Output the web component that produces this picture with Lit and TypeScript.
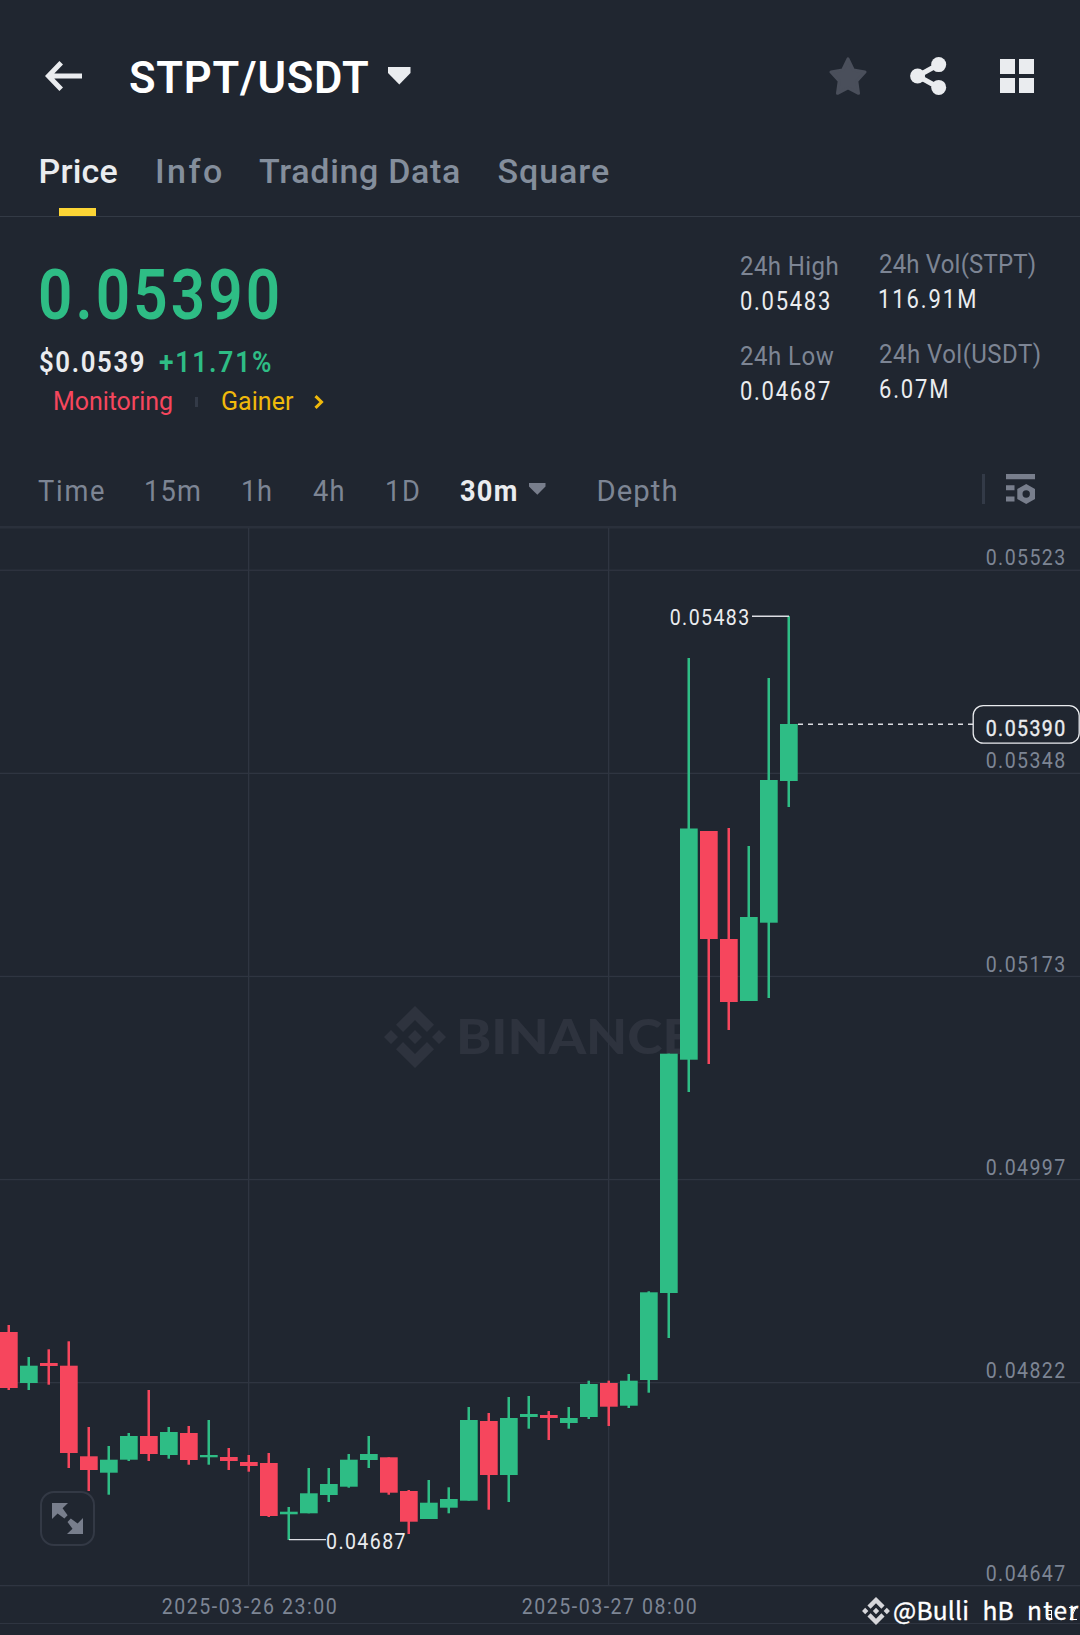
import { LitElement, html, svg, css } from "lit";
import { customElement, property } from "lit/decorators.js";
import { classMap } from "lit/directives/class-map.js";

/** A one-line label whose visible glyphs span exactly `w` pixels; `squeeze` condenses the glyphs. */
@customElement("fit-label")
class FitLabel extends LitElement {
  static styles = css`
    :host { display: block; white-space: pre; }
    .text { display: inline-block; transform-origin: 0 50%; }
  `;
  @property() text = "";
  @property({ type: Number }) w = 0;
  @property({ type: Number }) squeeze = 1;

  firstUpdated() {
    const cs = getComputedStyle(this);
    const ctx = document.createElement("canvas").getContext("2d")!;
    ctx.font = `${cs.fontWeight} ${cs.fontSize} ${cs.fontFamily}`;
    const m = ctx.measureText(this.text);
    const ink = m.actualBoundingBoxLeft + m.actualBoundingBoxRight;
    const span = this.renderRoot.querySelector(".text") as HTMLElement;
    span.style.letterSpacing = `${(this.w / this.squeeze - ink) / (this.text.length - 1)}px`;
    span.style.marginLeft = `${m.actualBoundingBoxLeft * this.squeeze}px`;
    if (this.squeeze !== 1) span.style.transform = `scaleX(${this.squeeze})`;
    this.style.width = `${this.w}px`;
  }
  render() {
    return html`<span class="text">${this.text}</span>`;
  }
}

type Candle = [up: 0 | 1, high: number, top: number, bottom: number, low: number];

const CANDLES: Candle[] = [
  [0, 1325, 1332, 1388, 1390], [1, 1357, 1365.7, 1383, 1390], [0, 1349.3, 1363, 1366, 1384.7],
  [0, 1341.3, 1365.7, 1453, 1468], [0, 1427, 1456.3, 1470, 1491], [1, 1446, 1459.7, 1472.7, 1494.7],
  [1, 1433, 1436, 1459.7, 1461], [0, 1390, 1436, 1454, 1461], [1, 1427, 1432, 1455, 1458.7],
  [0, 1426, 1433, 1460, 1464.7], [1, 1420, 1455, 1457.3, 1464.7], [0, 1448, 1457, 1461, 1470],
  [0, 1455, 1462, 1466, 1471.7], [0, 1453, 1463, 1516, 1517], [1, 1507, 1511.7, 1514.3, 1540],
  [1, 1468, 1493.3, 1513.3, 1513.3], [1, 1468, 1484, 1495, 1502], [1, 1454, 1459.7, 1486.7, 1487.7],
  [1, 1436, 1454, 1460, 1468], [0, 1457.3, 1457.3, 1492.7, 1494.7], [0, 1490, 1491, 1521.7, 1534],
  [1, 1480, 1502.7, 1519, 1519], [1, 1487.3, 1499, 1507.7, 1513.3], [1, 1407, 1420, 1500.7, 1500.7],
  [0, 1413, 1421, 1475, 1509.7], [1, 1397, 1418, 1475, 1502], [1, 1396, 1414, 1417, 1428.7],
  [0, 1411, 1415, 1418, 1440], [1, 1407, 1418, 1423, 1428.7], [1, 1380.7, 1384, 1417, 1419],
  [0, 1380.7, 1383, 1406.7, 1426], [1, 1374, 1380.7, 1405.7, 1408], [1, 1291.3, 1292.3, 1380, 1392.7],
  [1, 1053.7, 1053.7, 1293, 1338], [1, 658, 828.5, 1059.7, 1092], [0, 831, 831, 939, 1064],
  [0, 828, 939, 1002, 1030], [1, 846, 917, 1001, 1001], [1, 678, 780, 922.7, 998],
  [1, 616, 724, 781, 807],
];

const LEVELS: [string, number][] = [
  ["0.05523", 569.6], ["0.05348", 772.7], ["0.05173", 975.8],
  ["0.04997", 1178.9], ["0.04822", 1382], ["0.04647", 1585],
];

/* Binance mark, centred on the origin inside a 62 unit square. */
const mark = svg`
  <path d="M0-31 19-12.2 12-5 0-17-12-5-19-12.2ZM0 31 19 12.2 12 5 0 17-12 5-19 12.2Z"/>
  <path d="M0-7 7 0 0 7-7 0ZM-24-7-17 0-24 7-31 0ZM24-7 31 0 24 7 17 0Z"/>`;

@customElement("candle-chart")
class CandleChart extends LitElement {
  static styles = css`
    :host { display: block; }
    svg { display: block; font: 400 22.2px Roboto, "Liberation Sans", sans-serif; }
    .grid { fill: #2f3541; }
    .axis { fill: #7d8594; }
    .value { fill: #eaecef; }
    .current { fill: #eaecef; stroke: #eaecef; stroke-width: .4; }
    .up { fill: #2ebd85; }
    .down { fill: #f6465d; }
    .brand { fill: #2e333e; }
    .brand-text { font: 900 47px Lato, sans-serif; }
    .leader { stroke: #dcdde3; stroke-width: 1.4; fill: none; }
    .dash { stroke: #dcdde3; stroke-width: 1.4; stroke-dasharray: 5 5; }
    .tag { fill: #202630; stroke: #eaecef; stroke-width: 1.3; }
    .button { fill: #202630; stroke: #333945; stroke-width: 2; }
    .glyph { fill: #787e8c; }
    .credit { fill: #fff; stroke: #fff; stroke-width: .35; font: 400 24.5px "Noto Sans CJK SC", "Noto Sans", sans-serif; }
    .marks { stroke: #fff; stroke-width: 1; fill: none; }
    .credit-mark { fill: #d6d6da; }
  `;

  private number(text: string, x: number, y: number, cls: string, width = 79.5) {
    const k = 0.88;
    return svg`<text class=${cls} transform="translate(${x} ${y}) scale(${k} 1)" textLength=${width / k}>${text}</text>`;
  }

  private credit(text: string, x: number, width: number) {
    return svg`<text class="credit" x=${x} y="1620" textLength=${width}>${text}</text>`;
  }

  render() {
    return html`<svg width="1080" height="1109" viewBox="0 526 1080 1109">
      <rect x="0" y="526" width="1080" height="2.5" fill="#2a303b"></rect>
      <g class="brand">
        <g transform="translate(415 1037)">${mark}</g>
        <text class="brand-text" x="456" y="1053.7" textLength="237" lengthAdjust="spacingAndGlyphs">BINANCE</text>
      </g>
      ${LEVELS.map(([, y]) => svg`<rect class="grid" x="0" y=${y} width="1080" height="1.3"/>`)}
      <rect class="grid" x="248" y="528" width="1.3" height="1057"></rect>
      <rect class="grid" x="608" y="528" width="1.3" height="1057"></rect>
      <rect class="grid" x="0" y="1623" width="1080" height="1"></rect>
      ${CANDLES.map(([up, high, top, bottom, low], i) => svg`
        <g class=${up ? "up" : "down"}>
          <rect x=${i * 20 + 7.5} y=${high} width="2.5" height=${low - high}/>
          <rect x=${i * 20} y=${top} width="17.7" height=${bottom - top}/>
        </g>`)}
      ${LEVELS.map(([t, y]) => this.number(t, 985.7, y - 4.3, "axis"))}
      <line class="dash" x1="798" y1="724.3" x2="973" y2="724.3"></line>
      <rect class="tag" x="973.2" y="705.6" width="106" height="37.6" rx="10"></rect>
      ${this.number("0.05390", 985.7, 735.7, "current")}
      <path class="leader" d="M752 616.3H789"></path>
      ${this.number("0.05483", 669.7, 624.7, "value")}
      <path class="leader" d="M289 1539.6H326"></path>
      ${this.number("0.04687", 326, 1549, "value")}
      ${this.number("2025-03-26 23:00", 161.7, 1613.5, "axis", 175)}
      ${this.number("2025-03-27 08:00", 521.7, 1613.5, "axis", 175)}
      <rect class="button" x="41" y="1492" width="53" height="53" rx="13"></rect>
      <path class="glyph" d="M52 1503H68L62.6 1508.3 67.6 1515.3 64.4 1518.6 57.6 1513.6 52 1519ZM83 1534H67L72.5 1528.7 67.5 1522 70.8 1518.6 77.6 1523.5 83 1518Z"></path>
      <g class="credit-mark" transform="translate(876 1611) scale(.45)">${mark}</g>
      ${this.credit("@Bulli", 893, 76)}
      ${this.credit("hB", 982.5, 31)}
      ${this.credit("nter", 1027, 51)}
      <path class="marks" d="M1046 1610.5H1052M1046 1614.5H1052M1046 1618.5H1052M1051.5 1610V1620M1069 1607.5H1076L1070 1619.5H1077"></path>
    </svg>`;
  }
}

@customElement("app-root")
class AppRoot extends LitElement {
  static styles = css`
    :host {
      display: block; width: 1080px; height: 1635px; overflow: hidden;
      background: #202630; color: #eaecef;
      font-family: Roboto, "Liberation Sans", sans-serif;
    }
    svg { display: block; flex: none; }
    .header { display: flex; align-items: center; box-sizing: border-box; height: 130px; padding: 21px 46px 0 44.5px; }
    .title { margin: 6px 20px 0 48.5px; font-size: 43.5px; font-weight: 600; color: #fff; line-height: 50px; }
    .star { margin-left: auto; margin-top: 1px; }
    .share { margin-left: 43px; }
    .apps { margin-left: 53px; }
    .tabs {
      display: grid; grid-template-columns: 116.5px 102px 239.5px 1fr; height: 86px;
      padding-left: 40.5px; border-bottom: 1px solid #333a45; font-size: 34px; font-weight: 500; color: #848e9c;
    }
    .tab { line-height: 78px; padding-top: 2px; height: 76px; }
    .tab.active { color: #eaecef; }
    .bar { width: 37px; height: 8px; margin-left: 18.5px; background: #fcd535; }
    .summary { display: flex; box-sizing: border-box; height: 233px; padding: 30px 0 0 40px; }
    .quote { width: 701px; padding-top: 13px; }
    .last { margin-left: 1px; font-size: 70px; line-height: 70px; font-weight: 600; color: #2ebd85; }
    .change { display: flex; gap: 15.5px; margin-top: 14px; font-size: 29.3px; line-height: 36px; font-weight: 600; }
    .change fit-label:first-child { margin-left: -.5px; }
    .up { color: #2ebd85; }
    .flags { display: flex; align-items: center; padding-left: 15px; font-size: 25px; line-height: 43px; }
    .risk { color: #f6465d; }
    .gain { color: #f0b90b; }
    .tick { width: 3px; height: 10px; margin: 0 24px 0 23px; background: #333a47; }
    .arrow { margin-left: 20px; }
    .stats { display: flex; flex-direction: column; gap: 20px; width: 139px; padding-top: 2px; font-size: 25px; line-height: 35px; }
    .stats.volume { padding-top: 0; }
    .caption { color: #7d8594; }
    .intervals {
      display: flex; align-items: center; box-sizing: border-box; height: 76px; padding: 5px 44px 0 38px;
      font-size: 29.3px; line-height: 40px; color: #7d8594;
    }
    .choices { display: grid; grid-template-columns: 108px 97px 70px 74px 73px 69px 69.5px 1fr; align-items: center; }
    .chosen { color: #eaecef; font-weight: 700; }
    .caret { margin-top: -3px; }
    .rule { width: 3px; height: 30px; margin: -3px 21px 0 auto; background: #333a47; }
    .tune { margin-top: -3px; }
  `;

  private stat(caption: string, cw: number, value: string, vw: number) {
    return html`<div>
      <fit-label class="caption" text=${caption} w=${cw} squeeze=".96"></fit-label>
      <fit-label text=${value} w=${vw} squeeze=".88"></fit-label>
    </div>`;
  }

  render() {
    const tabs: [string, number][] = [["Price", 77], ["Info", 64], ["Trading Data", 200], ["Square", 110.5]];
    const times: [string, number][] = [["Time", 66], ["15m", 53.5], ["1h", 28], ["4h", 30.5], ["1D", 32], ["30m", 56]];
    return html`
      <div class="header">
        <svg width="37" height="30" viewBox="0 0 37 30" fill="none" stroke="#eaecef" stroke-width="5">
          <path d="M16.2 1.8 3.4 15 16.2 28.2M3.5 15H37"></path>
        </svg>
        <fit-label class="title" text="STPT/USDT" w="238"></fit-label>
        <svg width="23" height="18" viewBox="0 0 23 18" fill="#eaecef"><path d="M0 0H22.5V6L11.3 17.5 0 6Z"></path></svg>
        <svg class="star" width="38" height="38" viewBox="0 0 38 38" fill="#4a4f5b" stroke="#4a4f5b" stroke-width="3" stroke-linejoin="round">
          <path d="M19 1.8 24.3 13 36 15 27.8 24 29.5 36.3 19 31 8.5 36.3 10.2 24 2 15 13.7 13Z"></path>
        </svg>
        <svg class="share" width="37" height="38" viewBox="0 0 37 38" fill="#eaecef">
          <path d="M28.5 7.5 7.7 19 28.5 30.5" fill="none" stroke="#eaecef" stroke-width="5"></path>
          <circle cx="28.7" cy="7.6" r="7.5"></circle><circle cx="7.6" cy="19" r="7.5"></circle><circle cx="28.7" cy="30.4" r="7.5"></circle>
        </svg>
        <svg class="apps" width="34" height="34" viewBox="0 0 34 34" fill="#eaecef">
          <path d="M0 0H15V15H0ZM19 0H34V15H19ZM0 19H15V34H0ZM19 19H34V34H19Z"></path>
        </svg>
      </div>
      <div class="tabs">
        ${tabs.map(([t, w], i) => html`<div>
          <fit-label class=${classMap({ tab: true, active: i === 0 })} text=${t} w=${w}></fit-label>
          ${i === 0 ? html`<div class="bar"></div>` : null}
        </div>`)}
      </div>
      <div class="summary">
        <div class="quote">
          <fit-label class="last" text="0.05390" w="237" squeeze=".86"></fit-label>
          <div class="change">
            <fit-label text="$0.0539" w="104" squeeze=".88"></fit-label>
            <fit-label class="up" text="+11.71%" w="112" squeeze=".9"></fit-label>
          </div>
          <div class="flags">
            <fit-label class="risk" text="Monitoring" w="117"></fit-label>
            <div class="tick"></div>
            <fit-label class="gain" text="Gainer" w="72"></fit-label>
            <svg class="arrow" width="10" height="14" viewBox="0 0 10 14" fill="none" stroke="#f0b90b" stroke-width="3">
              <path d="M1.5 1.2 7.5 7 1.5 12.8"></path>
            </svg>
          </div>
        </div>
        <div class="stats">
          ${this.stat("24h High", 97, "0.05483", 88.5)}
          ${this.stat("24h Low", 93, "0.04687", 88.5)}
        </div>
        <div class="stats volume">
          ${this.stat("24h Vol(STPT)", 154.5, "116.91M", 95)}
          ${this.stat("24h Vol(USDT)", 159.5, "6.07M", 67)}
        </div>
      </div>
      <div class="intervals">
        <div class="choices">
          ${times.map(([t, w], i) => html`<fit-label class=${classMap({ chosen: i === 5 })} text=${t} w=${w} squeeze=".93"></fit-label>`)}
          <svg class="caret" width="17" height="12" viewBox="0 0 17 12" fill="#787e8c"><path d="M0 0H16.5V3.5L8.3 11.8 0 3.5Z"></path></svg>
          <fit-label text="Depth" w="78"></fit-label>
        </div>
        <div class="rule"></div>
        <svg class="tune" width="30" height="30" viewBox="0 0 30 30" fill="#787e8c">
          <path d="M0 0H29V5.2H0ZM0 11.3H8.5V16.3H0ZM0 22.5H8.5V27.5H0Z"></path>
          <path fill-rule="evenodd" d="M20.2 10 29 15V25L20.2 30 11.3 25V15ZM20.2 16.3A3.7 3.7 0 1 0 20.2 23.7 3.7 3.7 0 1 0 20.2 16.3Z"></path>
        </svg>
      </div>
      <candle-chart></candle-chart>`;
  }
}
